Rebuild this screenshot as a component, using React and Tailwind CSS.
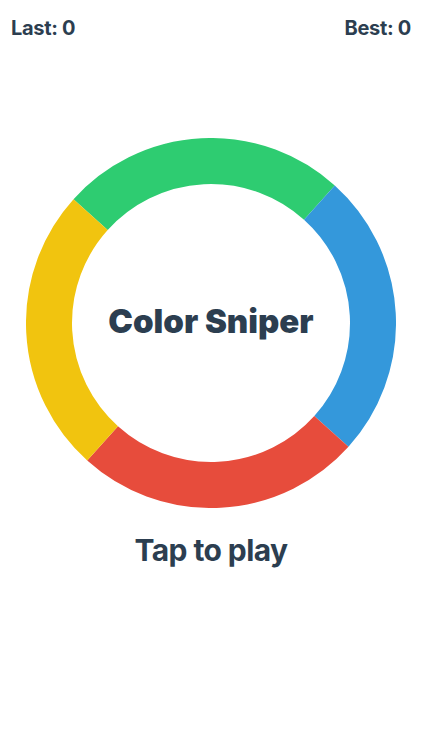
import React from "react";

const CX = 185;
const CY = 185;
const R = 162;

function arc(startDeg, endDeg) {
  const toXY = (d) => {
    const a = ((d - 90) * Math.PI) / 180;
    return [CX + R * Math.cos(a), CY + R * Math.sin(a)];
  };
  const [x1, y1] = toXY(startDeg);
  const [x2, y2] = toXY(endDeg);
  return `M ${x1} ${y1} A ${R} ${R} 0 0 1 ${x2} ${y2}`;
}

const segs = [
  { s: -48, e: 42, c: "#2ecc71" },
  { s: 42, e: 132, c: "#3498db" },
  { s: 132, e: 222, c: "#e74c3c" },
  { s: 222, e: 312, c: "#f1c40f" },
];

export default function App() {
  return (
    <div
      className="w-full h-[750px] bg-white text-[#2c3e50] flex flex-col"
      style={{ fontFamily: "Inter, 'Open Sans', sans-serif" }}
    >
      <div className="flex justify-between px-[11px] pt-[14px] text-[20px] font-bold leading-[28px] tracking-[-0.3px]">
        <span>Last: 0</span>
        <span>Best: 0</span>
      </div>
      <div className="relative mx-auto mt-[96px] w-[370px] h-[370px]">
        <svg width="370" height="370" viewBox="0 0 370 370" className="block">
          {segs.map((g, i) => (
            <path key={i} d={arc(g.s, g.e)} fill="none" stroke={g.c} strokeWidth="46" />
          ))}
        </svg>
        <div className="absolute inset-0 flex items-center justify-center pb-[3px]">
          <span className="text-[33px] font-black leading-none">Color Sniper</span>
        </div>
      </div>
      <div className="text-center mt-[24px] text-[30px] font-bold leading-[36px] tracking-[-0.6px]">Tap to play</div>
    </div>
  );
}
